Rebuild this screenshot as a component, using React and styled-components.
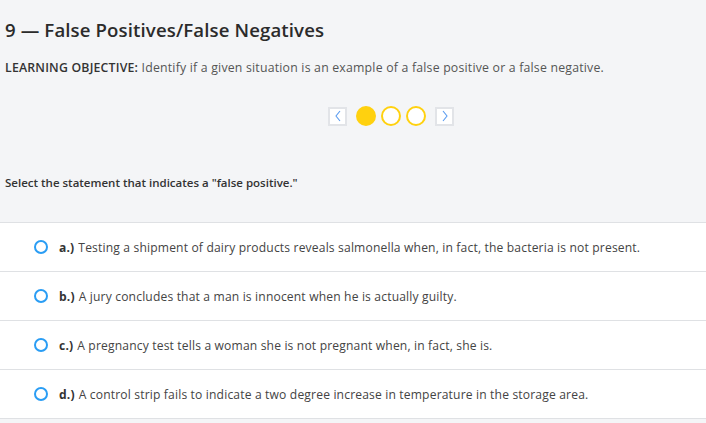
import React from "react";
import styled, { createGlobalStyle } from "styled-components";

const Global = createGlobalStyle`
  html, body { margin: 0; padding: 0; background: #f4f5f7; }
  body { font-family: "Open Sans", "Liberation Sans", sans-serif; color: #333; }
`;

const Page = styled.div`
  width: 706px;
  height: 423px;
  overflow: hidden;
  background: #f4f5f7;
`;

const Header = styled.div`
  padding: 17px 5px 0 5px;
`;

const Title = styled.h1`
  margin: 0;
  font-size: 18.6px;
  letter-spacing: 0.12px;
  font-weight: 600;
  color: #2b2b2b;
  line-height: 26px;
`;

const Objective = styled.p`
  margin: 17px 0 0 0;
  font-size: 12.3px;
  letter-spacing: 0.2px;
  line-height: 16px;
  color: #555;
`;

const ObjLabel = styled.span`
  color: #333;
  font-weight: 600;
`;

const Pager = styled.div`
  display: flex;
  justify-content: center;
  align-items: center;
  gap: 5px;
  margin-top: 30px;
  padding-left: 76px;
`;

const Arrow = styled.button`
  width: 19px;
  height: 19px;
  padding: 0;
  border: 2px solid #e2e4e8;
  background: #fff;
  display: flex;
  align-items: center;
  justify-content: center;
  margin: 0 4px;
`;

const Dot = styled.span`
  width: 20px;
  height: 20px;
  box-sizing: border-box;
  border-radius: 50%;
  border: 2px solid #ffd10f;
  background: ${(p) => (p.$active ? "#ffd10f" : "#fff")};
`;

const Prompt = styled.div`
  padding: 49px 5px 0 5px;
  height: 96px;
  box-sizing: border-box;
  font-size: 11.5px;
  font-weight: 600;
  color: #333;
  line-height: 16px;
`;

const Options = styled.div`
  border-top: 1px solid #dfe1e4;
`;

const Option = styled.label`
  display: flex;
  align-items: center;
  height: 48px;
  background: #fff;
  border-bottom: 1px solid #dfe1e4;
  padding-left: 34px;
  gap: 11px;
  font-size: 12.1px;
  letter-spacing: 0.16px;
  color: #444;
`;

const Radio = styled.span`
  width: 14px;
  height: 14px;
  box-sizing: border-box;
  border-radius: 50%;
  border: 2px solid #2a9df4;
  flex: none;
`;

const Letter = styled.b`
  font-weight: 700;
  color: #333;
  margin-right: 4px;
`;

const Chevron = ({ dir }) => (
  <svg width="8" height="12" viewBox="0 0 8 12">
    <path
      d={dir === "left" ? "M6 1 L2 6 L6 11" : "M2 1 L6 6 L2 11"}
      fill="none"
      stroke="#5b9cf0"
      strokeWidth="1.1"
    />
  </svg>
);

const options = [
  ["a.)", "Testing a shipment of dairy products reveals salmonella when, in fact, the bacteria is not present."],
  ["b.)", "A jury concludes that a man is innocent when he is actually guilty."],
  ["c.)", "A pregnancy test tells a woman she is not pregnant when, in fact, she is."],
  ["d.)", "A control strip fails to indicate a two degree increase in temperature in the storage area."],
];

export default function App() {
  return (
    <Page>
      <Global />
      <Header>
        <Title>9 — False Positives/False Negatives</Title>
        <Objective>
          <ObjLabel>LEARNING OBJECTIVE:</ObjLabel> Identify if a given situation is an example of a false positive or a false negative.
        </Objective>
        <Pager>
          <Arrow aria-label="Previous"><Chevron dir="left" /></Arrow>
          <Dot $active />
          <Dot />
          <Dot />
          <Arrow aria-label="Next"><Chevron dir="right" /></Arrow>
        </Pager>
      </Header>
      <Prompt>Select the statement that indicates a "false positive."</Prompt>
      <Options>
        {options.map(([l, t]) => (
          <Option key={l}>
            <Radio />
            <span><Letter>{l}</Letter>{t}</span>
          </Option>
        ))}
      </Options>
    </Page>
  );
}
